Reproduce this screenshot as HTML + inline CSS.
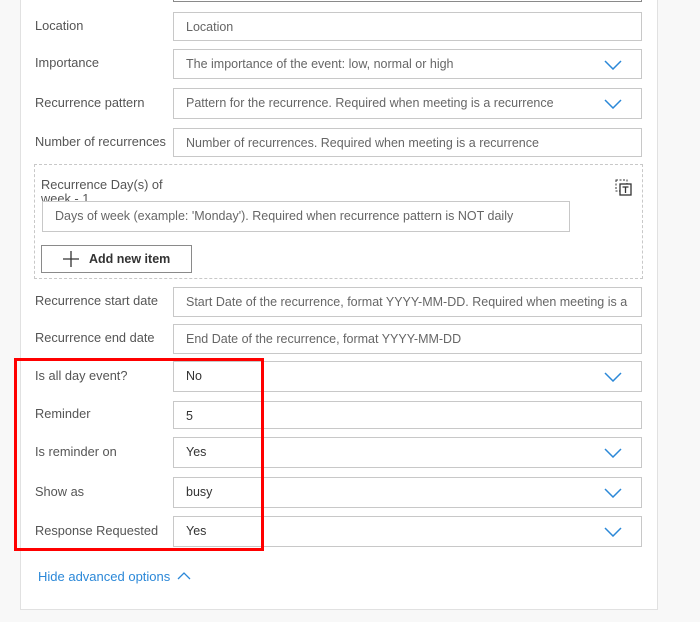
<!DOCTYPE html>
<html><head><style>
body{margin:0;width:700px;height:622px;background:#f8f8f8;font-family:"Liberation Sans",sans-serif;font-size:12.5px;position:relative;overflow:hidden}
.card{position:absolute;left:20px;top:-2px;width:636px;height:610px;background:#fff;border:1px solid #e1e1e1}
.a{position:absolute}
.lbl{position:absolute;left:35px;color:#555;font-size:12.8px}
.in{position:absolute;left:173px;width:469px;border:1px solid #c8c8c8;background:#fff;color:#666;box-sizing:border-box;height:30px;line-height:28px;padding-left:12px;white-space:nowrap;overflow:hidden}
.in.v{color:#333}
.chev{position:absolute;right:19px;top:10px}
</style></head><body>
<div class="card"></div>
<div class="a" style="left:173px;top:-6px;width:469px;height:8px;border:1px solid #8a8a8a;border-top:none;box-sizing:border-box"></div>

<div class="lbl" style="top:18px">Location</div>
<div class="in" style="top:12px;height:29px">Location</div>

<div class="lbl" style="top:55px">Importance</div>
<div class="in" style="top:49px">The importance of the event: low, normal or high<svg class="chev" width="18" height="10"><path d="M1 1l8 8 8-8" fill="none" stroke="#2b88d8" stroke-width="1.5"/></svg></div>

<div class="lbl" style="top:95px">Recurrence pattern</div>
<div class="in" style="top:88px;height:31px">Pattern for the recurrence. Required when meeting is a recurrence<svg class="chev" width="18" height="10"><path d="M1 1l8 8 8-8" fill="none" stroke="#2b88d8" stroke-width="1.5"/></svg></div>

<div class="lbl" style="top:134px">Number of recurrences</div>
<div class="in" style="top:128px;height:29px">Number of recurrences. Required when meeting is a recurrence</div>

<div class="a" style="left:34px;top:164px;width:609px;height:115px;border:1px dashed #c8c8c8;box-sizing:border-box"></div>
<div class="lbl" style="left:41px;top:178px;width:140px;line-height:14px;height:23px;overflow:hidden">Recurrence Day(s) of week - 1</div>
<svg class="a" style="left:615px;top:179px" width="18" height="18"><rect x="1" y="1" width="11" height="11" fill="none" stroke="#333" stroke-dasharray="2 1.5"/><rect x="5" y="5" width="11" height="11" fill="#fff" stroke="#333" stroke-width="1.3"/><path d="M7.5 8h6M10.5 8v6" stroke="#333" stroke-width="1.3"/></svg>
<div class="in" style="left:42px;top:201px;width:528px;height:31px;padding-left:12px">Days of week (example: 'Monday'). Required when recurrence pattern is NOT daily</div>
<div class="a" style="left:41px;top:245px;width:151px;height:28px;border:1px solid #8a8a8a;box-sizing:border-box;color:#333;font-weight:bold;line-height:26px;padding-left:47px">Add new item</div>
<svg class="a" style="left:63px;top:251px" width="16" height="16"><path d="M8 0v16M0 8h16" stroke="#333" stroke-width="1.3"/></svg>

<div class="lbl" style="top:293px">Recurrence start date</div>
<div class="in" style="top:287px">Start Date of the recurrence, format YYYY-MM-DD. Required when meeting is a</div>

<div class="lbl" style="top:330px">Recurrence end date</div>
<div class="in" style="top:324px">End Date of the recurrence, format YYYY-MM-DD</div>

<div class="lbl" style="top:368px">Is all day event?</div>
<div class="in v" style="top:361px;height:31px">No<svg class="chev" width="18" height="10"><path d="M1 1l8 8 8-8" fill="none" stroke="#2b88d8" stroke-width="1.5"/></svg></div>

<div class="lbl" style="top:406px">Reminder</div>
<div class="in v" style="top:401px;height:28px">5</div>

<div class="lbl" style="top:444px">Is reminder on</div>
<div class="in v" style="top:437px;height:31px">Yes<svg class="chev" width="18" height="10"><path d="M1 1l8 8 8-8" fill="none" stroke="#2b88d8" stroke-width="1.5"/></svg></div>

<div class="lbl" style="top:484px">Show as</div>
<div class="in v" style="top:477px;height:31px">busy<svg class="chev" width="18" height="10"><path d="M1 1l8 8 8-8" fill="none" stroke="#2b88d8" stroke-width="1.5"/></svg></div>

<div class="lbl" style="top:523px">Response Requested</div>
<div class="in v" style="top:516px;height:31px">Yes<svg class="chev" width="18" height="10"><path d="M1 1l8 8 8-8" fill="none" stroke="#2b88d8" stroke-width="1.5"/></svg></div>

<div class="a" style="left:14px;top:358px;width:250px;height:193px;border:3px solid #f00;box-sizing:border-box"></div>

<div class="a" style="left:38px;top:569px;color:#2b88d8;font-size:13px">Hide advanced options</div>
<svg class="a" style="left:177px;top:571px" width="14" height="9"><path d="M1 8l6-6 6 6" fill="none" stroke="#2b88d8" stroke-width="1.3"/></svg>
</body></html>
